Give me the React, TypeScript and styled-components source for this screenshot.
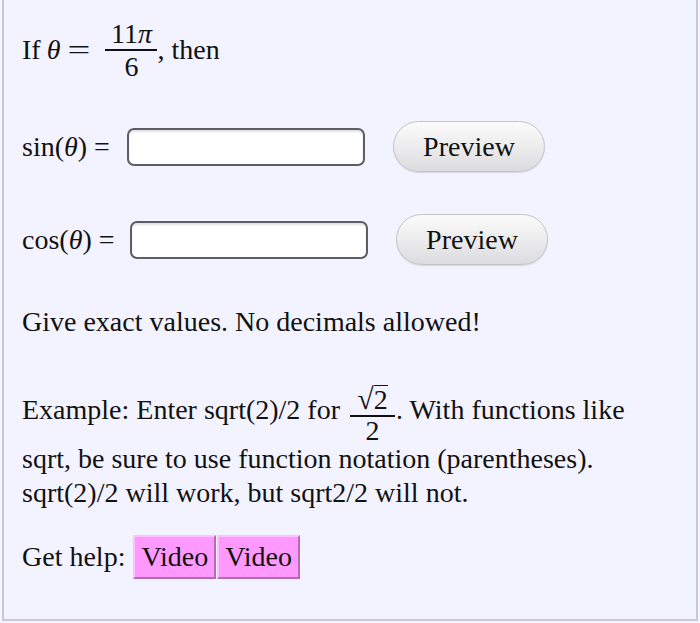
import React from "react";
import styled, { createGlobalStyle } from "styled-components";

const Global = createGlobalStyle`
  html, body { margin: 0; padding: 0; background: #f6f5fd; }
  body { font-family: "Liberation Serif", "Times New Roman", serif; color: #111; }
`;

const Panel = styled.div`
  box-sizing: border-box;
  height: 621px;
  margin: 0 2px;
  border: 2px solid #c9c5e0;
  border-top: none;
  background: #f3f3ff;
  padding: 21px 18px 0 18px;
  font-size: 28px;
  line-height: 34px;
`;

const MathRow = styled.div`
  display: flex;
  align-items: center;
  height: 58px;
`;

const Word = styled.span<{ $gap?: number }>`
  margin-right: ${(p) => p.$gap ?? 0}px;
`;

const Var = styled.span`
  font-style: italic;
`;

const WideEq = styled.span`
  display: inline-block;
  margin: 0 15px 0 8px;
  width: 22px;
  text-align: center;
  transform: scaleX(1.45);
`;

const Frac = styled.span<{ $w: number }>`
  display: inline-flex;
  flex-direction: column;
  align-items: center;
  vertical-align: middle;
  width: ${(p) => p.$w}px;
  line-height: 26px;
`;

const Num = styled.span`
  padding-bottom: 2px;
`;

const Bar = styled.span`
  align-self: stretch;
  height: 2px;
  background: #111;
`;

const Den = styled.span<{ $lh?: number }>`
  padding-top: 3px;
  line-height: ${(p) => p.$lh ?? 26}px;
`;

const AnswerRow = styled.div<{ $mt: number }>`
  display: flex;
  align-items: center;
  margin-top: ${(p) => p.$mt}px;
  height: 51px;
`;

const Label = styled.span<{ $w: number }>`
  display: inline-flex;
  align-items: center;
  width: ${(p) => p.$w}px;
  white-space: nowrap;
`;

const AnswerInput = styled.input`
  box-sizing: border-box;
  width: 238px;
  height: 38px;
  border: 2px solid #5d5d66;
  border-radius: 7px;
  background: #fff;
  box-shadow: inset 0 2px 2px rgba(0, 0, 0, 0.12);
  outline: none;
  font-size: 20px;
`;

const PreviewButton = styled.button`
  box-sizing: border-box;
  margin-left: 28px;
  width: 152px;
  height: 51px;
  border-radius: 26px;
  border: 1px solid #c4c4c8;
  background: linear-gradient(#fbfbfb, #e9e9eb 60%, #dcdcdf);
  box-shadow: 0 1px 1px rgba(0, 0, 0, 0.12);
  font-family: "Liberation Serif", "Times New Roman", serif;
  font-size: 28px;
  color: #111;
  padding: 0;
`;

const Para = styled.p<{ $mt: number }>`
  margin: ${(p) => p.$mt}px 0 0 0;
`;

const InlineFrac = styled.span`
  display: inline-flex;
  flex-direction: column;
  align-items: center;
  vertical-align: middle;
  margin: 0 1px 0 10px;
  width: 45px;
  line-height: 30px;
`;

const Root = styled.span`
  display: inline-flex;
  align-items: flex-start;
  padding-bottom: 1px;
`;

const RadicalSign = styled.span`
  font-size: 30px;
  line-height: 31px;
`;

const Radicand = styled.span`
  border-top: 1.5px solid #111;
  line-height: 28px;
  margin-top: 2px;
`;

const HelpRow = styled.div`
  display: flex;
  align-items: center;
  margin-top: 25px;
`;

const HelpLabel = styled.span`
  margin-right: 8px;
`;

const VideoButton = styled.button`
  box-sizing: border-box;
  height: 44px;
  padding: 0 6px;
  margin-right: 1px;
  background: #ff99ff;
  border: 2px solid;
  border-color: #ffc2ff #b56ab5 #b56ab5 #ffc2ff;
  font-family: "Liberation Serif", "Times New Roman", serif;
  font-size: 28px;
  color: #111;
`;

export default function App() {
  return (
    <>
      <Global />
      <Panel>
        <MathRow>
          <Word $gap={6}>If</Word>
          <Var>θ</Var>
          <WideEq>=</WideEq>
          <Frac $w={52}>
            <Num>
              11<Var>π</Var>
            </Num>
            <Bar />
            <Den>6</Den>
          </Frac>
          <span>, then</span>
        </MathRow>

        <AnswerRow $mt={42}>
          <Label $w={105}>
            sin(<Var>θ</Var>)&nbsp;=
          </Label>
          <AnswerInput type="text" />
          <PreviewButton>Preview</PreviewButton>
        </AnswerRow>

        <AnswerRow $mt={42}>
          <Label $w={108}>
            cos(<Var>θ</Var>)&nbsp;=
          </Label>
          <AnswerInput type="text" />
          <PreviewButton>Preview</PreviewButton>
        </AnswerRow>

        <Para $mt={40}>Give exact values. No decimals allowed!</Para>

        <Para $mt={44}>
          Example: Enter sqrt(2)/2 for
          <InlineFrac>
            <Root>
              <RadicalSign>√</RadicalSign>
              <Radicand>2</Radicand>
            </Root>
            <Bar />
            <Den $lh={22}>2</Den>
          </InlineFrac>
          . With functions like sqrt, be sure to use function notation
          (parentheses). sqrt(2)/2 will work, but sqrt2/2 will not.
        </Para>

        <HelpRow>
          <HelpLabel>Get help:</HelpLabel>
          <VideoButton>Video</VideoButton>
          <VideoButton>Video</VideoButton>
        </HelpRow>
      </Panel>
    </>
  );
}
